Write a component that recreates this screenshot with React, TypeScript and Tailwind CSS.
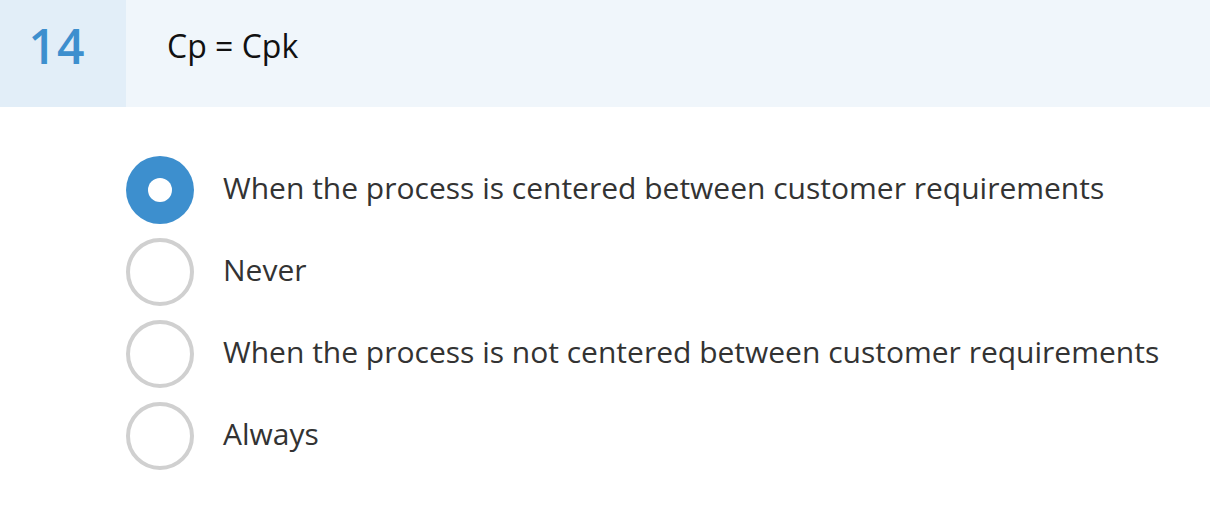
const options = [
  "When the process is centered between customer requirements",
  "Never",
  "When the process is not centered between customer requirements",
  "Always",
];

function Radio({ checked }: { checked: boolean }) {
  if (checked) {
    return (
      <span className="flex h-[68px] w-[68px] shrink-0 items-center justify-center rounded-full bg-[#3d8fce]">
        <span className="h-[24px] w-[24px] rounded-full bg-white" />
      </span>
    );
  }
  return (
    <span className="h-[68px] w-[68px] shrink-0 rounded-full border-[4px] border-[#d0d0d0] bg-white" />
  );
}

export default function App() {
  const selected = 0;
  return (
    <main className="min-h-[508px] w-[1210px] bg-white font-['Open_Sans',sans-serif]">
      <header className="flex h-[107px] bg-[#f0f6fb]">
        <div className="flex w-[126px] justify-center bg-[#e2eef8] pt-[16px] pr-[12px]">
          <span className="text-[48px] font-semibold leading-[60px] text-[#3d8fce] tracking-[1px]">14</span>
        </div>
        <h1 className="pl-[41px] pt-[25px] text-[32px] leading-[42px] text-[#111]">Cp = Cpk</h1>
      </header>
      <ul className="flex flex-col gap-[14px] pl-[126px] pt-[49px]">
        {options.map((o, i) => (
          <li key={o} className="flex items-center gap-[29px]">
            <Radio checked={i === selected} />
            <span className="pb-[4px] text-[30px] leading-[40px] text-[#333]">{o}</span>
          </li>
        ))}
      </ul>
    </main>
  );
}
